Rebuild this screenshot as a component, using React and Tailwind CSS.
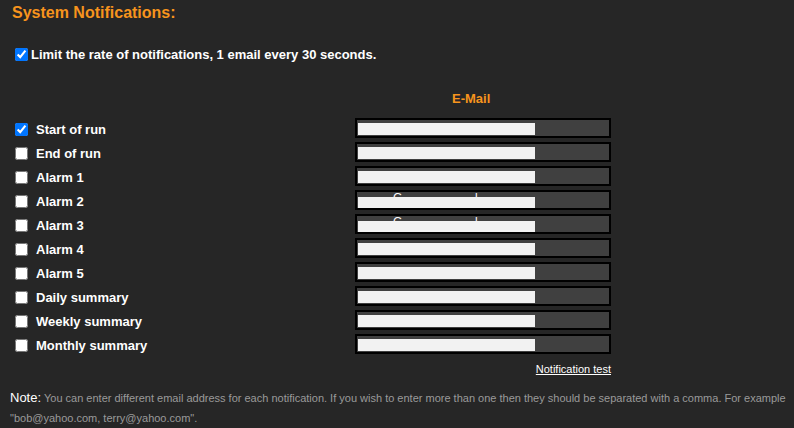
import React from "react";

const rows = [
  { label: "Start of run", checked: true },
  { label: "End of run" },
  { label: "Alarm 1" },
  { label: "Alarm 2", shifted: true },
  { label: "Alarm 3", shifted: true },
  { label: "Alarm 4" },
  { label: "Alarm 5" },
  { label: "Daily summary" },
  { label: "Weekly summary" },
  { label: "Monthly summary" },
];

function EmailBox({ shifted }) {
  return (
    <div className="relative mb-[2px] h-[20px] w-[256px] border-2 border-black bg-[#404040] overflow-hidden">
      {shifted && (
        <>
          <span className="absolute left-[36px] top-0 text-[12px] leading-[12px] text-white">G</span>
          <span className="absolute left-[118px] top-0 text-[12px] leading-[12px] text-white">l</span>
        </>
      )}
      <div
        className={
          shifted
            ? "absolute left-[1px] top-[5px] h-[12px] w-[177px] bg-[#f2f2f2]"
            : "absolute left-[1px] top-[3px] h-[12px] w-[177px] bg-[#f2f2f2]"
        }
      />
    </div>
  );
}

export default function App() {
  return (
    <div
      className="w-[794px] h-[428px] overflow-hidden bg-[#262626] text-white"
      style={{ fontFamily: '"Liberation Sans", Arial, sans-serif' }}
    >
      <div className="pt-[4px] pl-[12px] text-[16px] font-bold leading-[18px] text-[#f7941d]">
        System Notifications:
      </div>

      <label className="mt-[25px] flex h-[15px] items-center pl-[15px]">
        <input type="checkbox" defaultChecked className="h-[13px] w-[13px]" />
        <span className="ml-[3px] text-[13px] font-bold leading-[15px] text-white">
          Limit the rate of notifications, 1 email every 30 seconds.
        </span>
      </label>

      <div className="mt-[29px] grid grid-cols-[340px_256px] pl-[15px]">
        <div />
        <div className="pl-[97px] text-[13px] font-bold leading-[15px] text-[#f7941d]">E-Mail</div>
      </div>

      <div className="mt-[11px] flex flex-col pl-[15px]">
        {rows.map((r) => (
          <div key={r.label} className="grid h-[24px] grid-cols-[340px_256px] items-center">
            <label className="flex items-center">
              <input type="checkbox" defaultChecked={!!r.checked} className="h-[13px] w-[13px]" />
              <span className="ml-[8px] text-[13px] font-bold leading-[15px] text-white">{r.label}</span>
            </label>
            <EmailBox shifted={r.shifted} />
          </div>
        ))}
      </div>

      <div className="mt-[6px] flex w-[611px] justify-end">
        <a href="#" className="text-[11px] leading-[13px] text-white underline">
          Notification test
        </a>
      </div>

      <p className="mt-[12px] whitespace-nowrap pl-[10px] text-[11px] leading-[20px] text-[#9a9a9a]">
        <span className="text-[13px] text-white">Note:</span> You can enter different email address for each notification. If you wish to enter more than one then they should be separated with a comma. For example
        <br />
        "bob@yahoo.com, terry@yahoo.com".
      </p>
    </div>
  );
}
